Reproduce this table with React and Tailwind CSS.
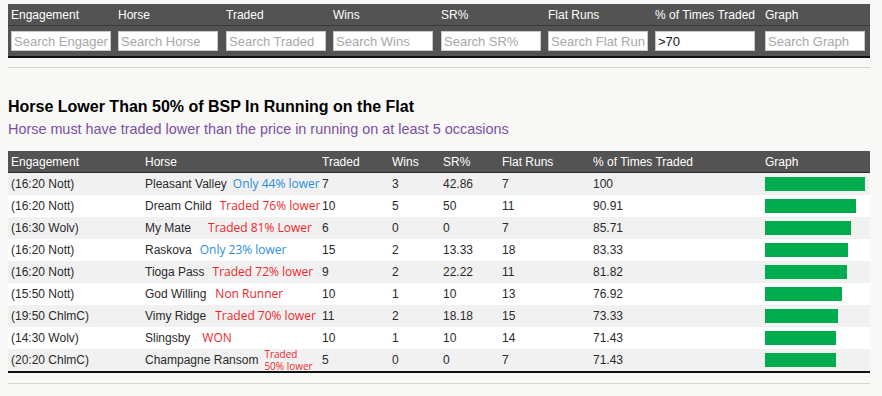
import React from "react";

const FILTERS = [
  { label: "Engagement", ph: "Search Engagement" },
  { label: "Horse", ph: "Search Horse" },
  { label: "Traded", ph: "Search Traded" },
  { label: "Wins", ph: "Search Wins" },
  { label: "SR%", ph: "Search SR%" },
  { label: "Flat Runs", ph: "Search Flat Runs" },
  { label: "% of Times Traded", ph: "Search % of Times Traded", value: ">70" },
  { label: "Graph", ph: "Search Graph" },
];

const FILTER_W = ["w-[107px]", "w-[108px]", "w-[107px]", "w-[108px]", "w-[107px]", "w-[107px]", "w-[110px]", "w-[108px]"];

const COLS = [
  { label: "Engagement", w: "w-[134px]" },
  { label: "Horse", w: "w-[177px]" },
  { label: "Traded", w: "w-[70px]" },
  { label: "Wins", w: "w-[51px]" },
  { label: "SR%", w: "w-[59px]" },
  { label: "Flat Runs", w: "w-[91px]" },
  { label: "% of Times Traded", w: "w-[172px]" },
  { label: "Graph", w: "w-[108px]" },
];

const ROWS = [
  { eng: "(16:20 Nott)", horse: "Pleasant Valley", note: "Only 44% lower", tone: "blue", ml: "ml-[6px]", traded: 7, wins: 3, sr: "42.86", runs: 7, pct: "100", bar: 100 },
  { eng: "(16:20 Nott)", horse: "Dream Child", note: "Traded 76% lower", tone: "red", ml: "ml-[8px]", traded: 10, wins: 5, sr: "50", runs: 11, pct: "90.91", bar: 91 },
  { eng: "(16:30 Wolv)", horse: "My Mate", note: "Traded 81% Lower", tone: "red", ml: "ml-[17px]", traded: 6, wins: 0, sr: "0", runs: 7, pct: "85.71", bar: 86 },
  { eng: "(16:20 Nott)", horse: "Raskova", note: "Only 23% lower", tone: "blue", ml: "ml-[8px]", traded: 15, wins: 2, sr: "13.33", runs: 18, pct: "83.33", bar: 83 },
  { eng: "(16:20 Nott)", horse: "Tioga Pass", note: "Traded 72% lower", tone: "red", ml: "ml-[8px]", traded: 9, wins: 2, sr: "22.22", runs: 11, pct: "81.82", bar: 82 },
  { eng: "(15:50 Nott)", horse: "God Willing", note: "Non Runner", tone: "red", ml: "ml-[9px]", traded: 10, wins: 1, sr: "10", runs: 13, pct: "76.92", bar: 77 },
  { eng: "(19:50 ChlmC)", horse: "Vimy Ridge", note: "Traded 70% lower", tone: "red", ml: "ml-[9px]", traded: 11, wins: 2, sr: "18.18", runs: 15, pct: "73.33", bar: 73 },
  { eng: "(14:30 Wolv)", horse: "Slingsby", note: "WON", tone: "red", ml: "ml-[12px]", traded: 10, wins: 1, sr: "10", runs: 14, pct: "71.43", bar: 71 },
  { eng: "(20:20 ChlmC)", horse: "Champagne Ransom", note: "Traded 50% lower", tone: "small", ml: "ml-[6px]", traded: 5, wins: 0, sr: "0", runs: 7, pct: "71.43", bar: 71 },
];

function Note({ row }) {
  if (row.tone === "small") {
    return (
      <span className={`${row.ml} inline-flex flex-col text-[10px] leading-[12px] text-[#f0262b] font-['Open_Sans',sans-serif]`}>
        <span>Traded</span>
        <span>50% lower</span>
      </span>
    );
  }
  const color = row.tone === "blue" ? "text-[#2a8ee6]" : "text-[#f0262b]";
  return (
    <span className={`${row.ml} ${color} text-[12px] font-['Open_Sans',sans-serif] whitespace-nowrap`}>
      {row.note}
    </span>
  );
}

export default function App() {
  return (
    <div className="w-[882px] h-[396px] overflow-hidden bg-[#f8f8f6] px-2 pt-1 font-['Liberation_Sans',Arial,sans-serif] text-[12px] text-[#2a2a2a]">
      {/* Filter table */}
      <div className="w-[862px] bg-[#535353] border-b-2 border-[#111]">
        <div className="flex h-[22px] items-center border-b border-[#3a3a3a] text-white">
          {FILTERS.map((f, i) => (
            <div key={f.label} className={`${FILTER_W[i]} px-[3px] whitespace-nowrap`}>{f.label}</div>
          ))}
        </div>
        <div className="flex h-[30px] items-center">
          {FILTERS.map((f, i) => (
            <div key={f.label} className={`${FILTER_W[i]} px-[3px]`}>
              <input
                readOnly
                defaultValue={f.value || ""}
                placeholder={f.ph}
                className="w-[100px] h-[20px] bg-white border border-[#c8c8c8] px-[2px] text-[13px] text-[#111] placeholder:text-[#a8a8a8] outline-none font-['Liberation_Sans',Arial,sans-serif]"
              />
            </div>
          ))}
        </div>
      </div>

      <div className="w-[862px] mt-[9px] border-t border-[#d6d6cf]" />

      {/* Title */}
      <h2 className="mt-[29px] text-[16px] font-bold text-black leading-[20px]">
        Horse Lower Than 50% of BSP In Running on the Flat
      </h2>
      <p className="mt-[3px] text-[14.4px] leading-[18px] text-[#7a4fa3]">
        Horse must have traded lower than the price in running on at least 5 occasions
      </p>

      {/* Results table */}
      <div className="w-[862px] mt-[13px] border-b-2 border-[#111]">
        <div className="flex h-[22px] items-center bg-[#535353] text-white border-b border-[#2a2a2a]">
          {COLS.map(c => (
            <div key={c.label} className={`${c.w} px-[3px] whitespace-nowrap`}>{c.label}</div>
          ))}
        </div>
        {ROWS.map((r, i) => (
          <div key={i} className={`flex h-[22px] items-center ${i % 2 === 0 ? "bg-[#f1f1f1]" : "bg-white"}`}>
            <div className="w-[134px] px-[3px]">{r.eng}</div>
            <div className="w-[177px] px-[3px] flex items-center whitespace-nowrap">
              <span>{r.horse}</span>
              <Note row={r} />
            </div>
            <div className="w-[70px] px-[3px]">{r.traded}</div>
            <div className="w-[51px] px-[3px]">{r.wins}</div>
            <div className="w-[59px] px-[3px]">{r.sr}</div>
            <div className="w-[91px] px-[3px]">{r.runs}</div>
            <div className="w-[172px] px-[3px]">{r.pct}</div>
            <div className="w-[108px] px-[3px]">
              <div className="h-[14px] bg-[#00ad4e]" style={{ width: `${r.bar}px` }} />
            </div>
          </div>
        ))}
      </div>

      <div className="w-[862px] mt-[10px] border-t border-[#d6d6cf]" />
    </div>
  );
}
